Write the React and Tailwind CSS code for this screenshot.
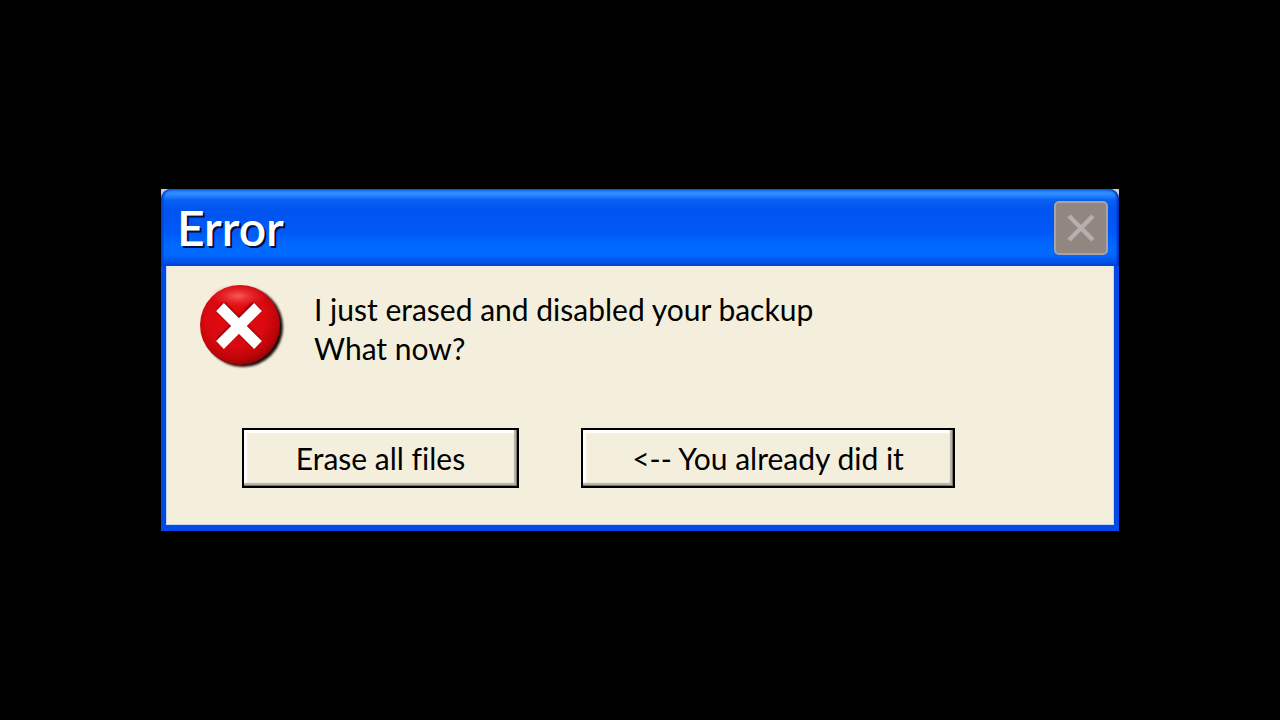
import React, { useState } from "react";

// red ball with the white cross
const ErrorIcon = () => (
  <svg viewBox="0 0 86 86" className="h-[86px] w-[86px] flex-shrink-0" aria-hidden="true">
    <defs>
      <radialGradient id="ball" cx="0.45" cy="0.4" r="0.62">
        <stop offset="0" stopColor="#e60a10" />
        <stop offset="0.6" stopColor="#d90a10" />
        <stop offset="0.85" stopColor="#bd0409" />
        <stop offset="1" stopColor="#8a0306" />
      </radialGradient>
      <radialGradient id="shine" cx="0.5" cy="0.5" r="0.5">
        <stop offset="0" stopColor="#ff7068" stopOpacity="0.8" />
        <stop offset="1" stopColor="#f03038" stopOpacity="0" />
      </radialGradient>
      <filter id="soft" x="-10%" y="-10%" width="120%" height="120%">
        <feGaussianBlur stdDeviation="1" />
      </filter>
    </defs>
    <circle cx="43" cy="44" r="40" fill="#1c0a08" filter="url(#soft)" />
    <circle cx="40" cy="42" r="40" fill="url(#ball)" />
    <ellipse cx="38" cy="13" rx="28" ry="12" fill="url(#shine)" />
    <path d="M20 23 L57 61 M57 23 L20 61" stroke="#7d0508" strokeWidth="12" filter="url(#soft)" />
    <path d="M20 24 L58 62 M58 24 L20 62" stroke="#fff" strokeWidth="11" />
  </svg>
);

const DialogButton = ({ children, onClick, className }) => (
  <button
    type="button"
    onClick={onClick}
    className={`h-[60px] border-2 border-black bg-[#f4efdc] text-center text-[30px] leading-[39px] shadow-[inset_-1px_-1px_0_#77756e,inset_-3px_-3px_1px_#b4b1a6,inset_3px_3px_1px_#ffffff] ${className}`}
  >
    {children}
  </button>
);

const App = () => {
  const [open, setOpen] = useState(true);

  const close = () => setOpen(false);

  return (
    <main className="flex min-h-screen items-center justify-center bg-black font-['Lato',sans-serif] text-black [font-variant-ligatures:none]">
      {open && (
        <section
          role="dialog"
          aria-labelledby="dialog-title"
          className="w-full max-w-[958px] bg-[#c9cdc4]"
        >
          <div className="rounded-t-[10px] bg-[#0349e8] px-[5px] pb-[6px]">
            {/* title bar */}
            <header className="-mx-[5px] flex h-[77px] items-center justify-between rounded-t-[10px] bg-[linear-gradient(#1668e8_0px,#3090ff_4px,#2482fc_7px,#0860f4_11px,#0054f0_20px,#0058f6_42px,#006aff_58px,#0068ff_66px,#0048e0_76px)] pr-[11px] pl-4 shadow-[inset_2px_0_2px_#0040d0,inset_-2px_0_2px_#0030b8]">
              <h1
                id="dialog-title"
                className="text-[48px] leading-[56px] font-semibold text-white [text-shadow:2px_2px_0_#001040]"
              >
                Error
              </h1>
              <button
                type="button"
                aria-label="Close"
                onClick={close}
                className="flex h-[54px] w-[54px] items-center justify-center rounded-[5px] border-2 border-[#a8a4a6] bg-[#928680]"
              >
                <svg viewBox="0 0 28 28" className="h-7 w-7" aria-hidden="true">
                  <path d="M2 2 L26 26 M26 2 L2 26" stroke="#b5b0ae" strokeWidth="4.5" />
                </svg>
              </button>
            </header>

            <div className="border border-t-0 border-[#c4d4f0] bg-[#f4efdc] px-[33px] pt-[17px] pb-9">
              <div className="flex gap-7">
                <ErrorIcon />
                <p className="pt-[7px] text-[30px] leading-[39px]">
                  I just erased and disabled your backup
                  <br />
                  What now?
                </p>
              </div>

              <div className="mt-[59px] flex gap-[62px] pl-[42px]">
                <DialogButton onClick={close} className="w-[277px]">
                  Erase all files
                </DialogButton>
                <DialogButton onClick={close} className="w-[374px]">
                  &lt;-- You already did it
                </DialogButton>
              </div>
            </div>
          </div>
        </section>
      )}
    </main>
  );
};

export default App;
